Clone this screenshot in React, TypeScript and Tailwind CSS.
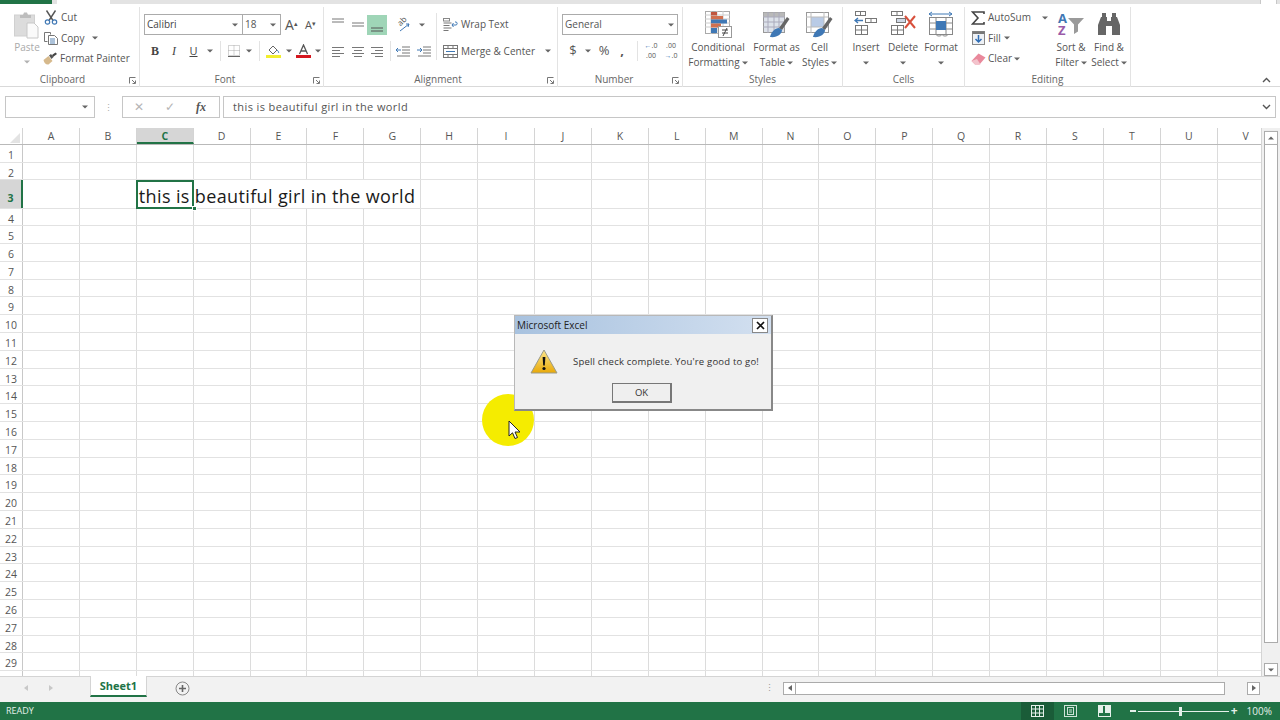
import type { ReactNode } from "react"

const COLS = "ABCDEFGHIJKLMNOPQRSTUV".split("")
const ROWS = Array.from({ length: 30 }, (_, i) => i + 1)

const Caret = ({ className = "" }: { className?: string }) => (
  <svg width="6" height="4" viewBox="0 0 6 4" className={"shrink-0 " + className}>
    <path d="M0 0.5h6L3 3.5z" fill="#666" />
  </svg>
)

const Launcher = () => (
  <svg width="7" height="7" viewBox="0 0 7 7" className="absolute right-[3px] bottom-[3px]">
    <path d="M0.5 6.5V0.5H6.5M3 3l3 3M6.5 3.5V6.5H3.5" fill="none" stroke="#777" />
  </svg>
)

const Group = ({ w, pr, label, launcher, children }: { w: string; pr: string; label: string; launcher?: boolean; children: ReactNode }) => (
  <div className={"relative shrink-0 flex flex-col h-[80px] border-r border-[#e3e3e3] " + w}>
    <div className="flex-1 flex min-h-0">{children}</div>
    <div className={"h-[15px] text-center text-[10px] leading-[15px] text-[#666] " + pr}>{label}</div>
    {launcher && <Launcher />}
  </div>
)

const BigBtn = ({ w, top, bottom, caretBelow, children }: { w: string; top: string; bottom?: string; caretBelow?: boolean; children: ReactNode }) => (
  <div className={"flex flex-col items-center shrink-0 " + w}>
    <div className="h-[29px] shrink-0 mt-[4px] flex items-start justify-center">{children}</div>
    <div className="h-[15px] shrink-0 leading-[15px] whitespace-nowrap">{top}</div>
    {bottom && (
      <div className="h-[15px] shrink-0 leading-[15px] whitespace-nowrap flex items-center gap-[2px]">
        {bottom}
        <Caret />
      </div>
    )}
    {caretBelow && <Caret className="mt-[6px]" />}
  </div>
)

const PasteIcon = () => (
  <svg width="26" height="27" viewBox="0 0 26 27">
    <rect x="0.5" y="3" width="20" height="21" fill="#dcdcdc" stroke="#d0d0d0" />
    <path d="M6 3h3l1-2.5h3l1 2.5h3v3H6z" fill="#bdbdbd" />
    <path d="M13 11h7l4 4v11H13z" fill="#fafafa" stroke="#c8c8c8" />
  </svg>
)
const CutIcon = () => (
  <svg width="14" height="15" viewBox="0 0 14 15" fill="none">
    <path d="M2.5 0.5l6.5 10M11.5 0.5L5 10.5" stroke="#555" strokeWidth="1.4" />
    <circle cx="3.5" cy="12" r="2.2" stroke="#3f78b5" strokeWidth="1.2" />
    <circle cx="10.5" cy="12" r="2.2" stroke="#3f78b5" strokeWidth="1.2" />
  </svg>
)
const CopyIcon = () => (
  <svg width="14" height="13" viewBox="0 0 14 13" fill="none">
    <path d="M0.5 0.5h6v2M0.5 0.5v9h3" stroke="#777" />
    <path d="M4.5 3.5h6l3 3v6h-9z" fill="#fff" stroke="#777" />
    <path d="M6 7h5M6 9h5M6 11h5" stroke="#5a86b5" />
  </svg>
)
const PainterIcon = () => (
  <svg width="15" height="13" viewBox="0 0 15 13">
    <path d="M0.5 8l5-4 4 5-4 3.5C3 13 1 11 0.5 8z" fill="#d6b98c" />
    <path d="M6 3.5l2-1.5 2.5 3-2 2z" fill="#555" />
    <path d="M9 3l3.5-2.5 1.5 1.5-4 3z" fill="#444" />
  </svg>
)
const Lines = ({ a, b, c, color = "#777" }: { a: string; b: string; c: string; color?: string }) => (
  <svg width="14" height="11" viewBox="0 0 14 11" fill="none" stroke={color}>
    <path d={a} />
    <path d={b} />
    <path d={c} />
  </svg>
)
const OrientIcon = () => (
  <div className="relative w-[15px] h-[14px]">
    <span className="absolute left-[1px] -top-[3px] -rotate-45 text-[8px] leading-[12px] text-[#555]">ab</span>
    <svg width="15" height="14" viewBox="0 0 15 14" fill="none" className="absolute left-0 top-0">
      <path d="M4 13L13 6M13 6h-3M13 6l-1 3" stroke="#3f78b5" />
    </svg>
  </div>
)
const IndentIcon = ({ inc }: { inc?: boolean }) => (
  <svg width="14" height="11" viewBox="0 0 14 11" fill="none">
    <path d="M6 1h8M6 4h8M6 7h8M1 10h13" stroke="#777" />
    {inc ? <path d="M0 4h5M3 2l2 2-2 2" stroke="#3f78b5" /> : <path d="M0 4h5M2 2L0 4l2 2" stroke="#3f78b5" />}
  </svg>
)
const WrapIcon = () => (
  <svg width="15" height="13" viewBox="0 0 15 13" fill="none">
    <rect x="0.5" y="0.5" width="6" height="2.5" stroke="#888" />
    <path d="M0.5 5h8M0.5 7.5h6M0.5 10h8M0.5 12.5h5" stroke="#777" />
    <path d="M9 7h4c1.5 0 1.5-3 0-3h-1M10.5 5L9 7l1.5 2" stroke="#3f78b5" />
  </svg>
)
const MergeIcon = () => (
  <svg width="15" height="13" viewBox="0 0 15 13" fill="none" stroke="#777">
    <rect x="0.5" y="0.5" width="14" height="12" />
    <path d="M0.5 3.5h14M0.5 9.5h14M5 0.5v3M10 0.5v3M5 9.5v3M10 9.5v3" />
    <path d="M3 6.5h9" stroke="#3f78b5" />
  </svg>
)
const BordersIcon = () => (
  <svg width="12" height="12" viewBox="0 0 12 12" fill="none" stroke="#aaa" strokeDasharray="1 1">
    <rect x="0.5" y="0.5" width="11" height="10" />
    <path d="M6 0.5v10M0.5 5.5h11" />
    <path d="M0 11.5h12" stroke="#666" strokeDasharray="none" />
  </svg>
)
const FillIcon = () => (
  <svg width="15" height="14" viewBox="0 0 15 14">
    <path d="M3 6l4-4 4 4-4 4z" fill="#fff" stroke="#666" />
    <path d="M11 6c1 1 2 2 1.5 3" fill="none" stroke="#3f78b5" />
    <rect x="0" y="11" width="15" height="3" fill="#f2ee2e" />
  </svg>
)
const FontColorIcon = () => (
  <svg width="15" height="14" viewBox="0 0 15 14">
    <path d="M3.500 10L7.500 1l4 9M5 7h5" fill="none" stroke="#555" strokeWidth="1.3" />
    <rect x="0" y="11" width="15" height="3" fill="#d5171f" />
  </svg>
)
const CondIcon = () => (
  <svg width="27" height="27" viewBox="0 0 27 27">
    <rect x="0.5" y="0.5" width="24" height="22" fill="#fff" stroke="#aaa" />
    <path d="M0 4h25M0 8h25M0 12h25M0 16h25M6 0v23M12 0v23M18 0v23" stroke="#ccc" />
    <rect x="6" y="1" width="6" height="3.5" fill="#c0563f" />
    <rect x="6" y="5" width="12" height="3.5" fill="#d07050" />
    <rect x="6" y="8.5" width="16" height="4" fill="#3f78b5" />
    <rect x="6" y="12.5" width="10" height="4" fill="#d07050" />
    <rect x="6" y="17" width="6" height="5" fill="#3f78b5" />
    <rect x="13.5" y="15.5" width="13" height="11" fill="#fff" stroke="#999" />
    <path d="M17 19h6M17 22h6M22 17l-4 8" stroke="#444" fill="none" />
  </svg>
)
const TableIcon = () => (
  <svg width="27" height="27" viewBox="0 0 27 27">
    <rect x="0.5" y="1.5" width="21" height="20" fill="#dde2ea" stroke="#999" />
    <rect x="0.5" y="1.5" width="21" height="4.5" fill="#b9b9b9" />
    <path d="M0 6h22M0 11h22M0 16h22M5 1v21M11 1v21M16 1v21" stroke="#aab" />
    <path d="M16 17L24 6l2.500 2L19 19z" fill="#666" />
    <path d="M7 26c1-5 5-9 9-9l3 2c0 4-5 8-12 7z" fill="#3f78b5" />
  </svg>
)
const StylesIcon = () => (
  <svg width="27" height="27" viewBox="0 0 27 27">
    <rect x="0.5" y="1.5" width="22" height="20" fill="#fff" stroke="#999" />
    <rect x="5" y="6" width="13" height="10" fill="#b9cbe6" />
    <path d="M0 6h22M5 1v21M18 1v21M0 16h22" stroke="#bbb" />
    <path d="M16 17L24 6l2.500 2L19 19z" fill="#666" />
    <path d="M7 26c1-5 5-9 9-9l3 2c0 4-5 8-12 7z" fill="#3f78b5" />
  </svg>
)
const InsertIcon = () => (
  <svg width="24" height="24" viewBox="0 0 24 24" fill="none" stroke="#777">
    <rect x="1.5" y="0.5" width="10" height="4" />
    <path d="M6.5 0.5v4" />
    <rect x="11.5" y="7.5" width="11" height="4" />
    <path d="M17 7.5v4" />
    <path d="M1 9.5h8M4 7L1 9.5 4 12" stroke="#3f78b5" strokeWidth="1.4" />
    <rect x="1.5" y="14.5" width="12" height="9" />
    <path d="M7.500 14.5v9M1.5 19h12" />
  </svg>
)
const DeleteIcon = () => (
  <svg width="27" height="24" viewBox="0 0 27 24" fill="none" stroke="#777">
    <rect x="1.5" y="0.5" width="11" height="4" />
    <path d="M7 0.5v4" />
    <rect x="6.5" y="7.5" width="9" height="4" fill="#cfd8e6" />
    <rect x="1.5" y="14.5" width="12" height="9" />
    <path d="M7.500 14.5v9M1.5 19h12" />
    <path d="M15 5l10 12M25 5L15 17" stroke="#d8503c" strokeWidth="2" />
  </svg>
)
const FormatIcon = () => (
  <svg width="26" height="27" viewBox="0 0 26 27" fill="none" stroke="#888">
    <path d="M1 3h23M1 3l3-2M1 3l3 2M24 3l-3-2M24 3l-3 2" stroke="#3f78b5" />
    <rect x="1.5" y="6.5" width="23" height="17" />
    <path d="M1.5 12h23M1.5 18h23M8 6.500v17M18 6.500v17" />
    <rect x="8" y="10" width="10" height="9" fill="#3f78b5" stroke="none" />
    <path d="M8 23.5c1 2 5 2 6 0M14 23.5c1 2 5 2 6 0" />
  </svg>
)
const SigmaIcon = () => (
  <svg width="14" height="14" viewBox="0 0 14 14" fill="none">
    <path d="M13 3V1H1.500L7 7l-5.500 6H13v-2" stroke="#444" strokeWidth="1.6" />
  </svg>
)
const FillDownIcon = () => (
  <svg width="13" height="14" viewBox="0 0 13 14">
    <rect x="0.5" y="0.5" width="12" height="13" fill="#eef1f5" stroke="#888" />
    <rect x="0.5" y="0.5" width="12" height="2.5" fill="#777" />
    <path d="M6.500 4v7M3.500 8l3 3 3-3" fill="none" stroke="#2f6db5" strokeWidth="1.5" />
  </svg>
)
const EraserIcon = () => (
  <svg width="15" height="12" viewBox="0 0 15 12">
    <path d="M0.5 8l7-7.500 7 4-6 7H4z" fill="#e9899c" />
    <path d="M0.5 8L4 11.500h5.500L6 6z" fill="#f3c3cc" />
  </svg>
)
const SortIcon = () => (
  <div className="flex items-start">
    <div className="flex flex-col font-bold text-[13px] leading-[12px] pt-[1px]">
      <span className="text-[#3f78b5]">A</span>
      <span className="text-[#9a5ba8]">Z</span>
    </div>
    <svg width="16" height="16" viewBox="0 0 16 16" className="mt-[7px] ml-px">
      <path d="M0 0h16l-6 6.500v7l-4 2.500V6.500z" fill="#9a9a9a" />
    </svg>
  </div>
)
const BinocularIcon = () => (
  <svg width="24" height="22" viewBox="0 0 24 22" fill="#666" className="mt-[2px]">
    <path d="M5 0h4v4H5zM15 0h4v4h-4z" />
    <path d="M4 4h6v4h4V4h6l3 8v10h-8v-9h-6v9H1V12z" />
  </svg>
)
const GridIcon = () => (
  <svg width="13" height="12" viewBox="0 0 13 12" fill="none" stroke="#e5f0ea">
    <rect x="0.5" y="0.5" width="12" height="11" />
    <path d="M4.500 0.5v11M8.500 0.5v11M0.5 4h12M0.5 8h12" />
  </svg>
)
const PageIcon = () => (
  <svg width="13" height="12" viewBox="0 0 13 12" fill="none" stroke="#cfe3d8">
    <rect x="0.5" y="0.5" width="12" height="11" />
    <rect x="3.5" y="2.5" width="6" height="7" />
    <path d="M5 5h3M5 7h3" />
  </svg>
)
const BreakIcon = () => (
  <svg width="13" height="12" viewBox="0 0 13 12">
    <rect x="0.5" y="0.5" width="12" height="11" fill="none" stroke="#e5f0ea" />
    <path d="M1 1h4v7H1zM7 1h5v7H7z" fill="#e5f0ea" />
  </svg>
)

const IconCell = ({ w, children }: { w: string; children: ReactNode }) => (
  <div className={"shrink-0 flex items-center justify-center " + w}>{children}</div>
)

const Sep = () => <div className="shrink-0 w-px h-[20px] bg-[#e3e3e3]" />

const Ribbon = () => (
  <div className="h-[83px] flex border-b border-[#d9d9d9] bg-white pt-[3px]">
    <Group w="w-[140px]" pr="pr-[14px]" label="Clipboard" launcher>
      <div className="ml-[10px] w-[34px] flex flex-col items-center text-[#aaa]">
        <div className="mt-[5px] h-[28px] shrink-0"><PasteIcon /></div>
        <div className="h-[15px] shrink-0 leading-[15px]">Paste</div>
        <Caret className="mt-[5px] opacity-50" />
      </div>
      <div className="flex flex-col mt-[2px] gap-[3.5px]">
        <div className="h-[17px] flex items-center gap-[3px]"><CutIcon />Cut</div>
        <div className="h-[17px] flex items-center gap-[3px]"><CopyIcon />Copy<Caret className="ml-[5px]" /></div>
        <div className="h-[17px] flex items-center gap-[2px] -ml-px"><PainterIcon />Format Painter</div>
      </div>
    </Group>

    <Group w="w-[184px]" pr="pr-[13px]" label="Font" launcher>
      <div className="pl-[4px] pt-[7px] flex flex-col">
        <div className="h-[21px] flex items-center">
          <div className="w-[99px] h-[21px] border border-[#ababab] flex items-center justify-between pl-[2px] pr-[4px] text-[#444]">Calibri<Caret /></div>
          <div className="w-[38px] h-[21px] border border-l-0 border-[#ababab] flex items-center justify-between pl-[2px] pr-[4px]">18<Caret /></div>
          <span className="ml-[4px] w-[20px] text-[14px] leading-none text-[#555]">A<sup className="text-[7px]">▴</sup></span>
          <span className="w-[20px] text-[11px] leading-none text-[#555]">A<sup className="text-[7px]">▾</sup></span>
        </div>
        <div className="mt-[5px] h-[22px] flex items-center text-[#444]">
          <span className="w-[19px] text-center font-['Liberation_Serif',serif] font-bold text-[12px] pl-[3px]">B</span>
          <span className="w-[19px] text-center font-['Liberation_Serif',serif] italic text-[12px] pl-[3px]">I</span>
          <span className="w-[20px] text-center text-[11px] underline pl-[3px]">U</span>
          <Caret className="ml-[5px]" />
          <div className="ml-[7px]"><Sep /></div>
          <IconCell w="w-[25px]"><BordersIcon /></IconCell>
          <Caret />
          <div className="ml-[7px]"><Sep /></div>
          <IconCell w="w-[26px]"><FillIcon /></IconCell>
          <Caret />
          <IconCell w="w-[23px]"><FontColorIcon /></IconCell>
          <Caret />
        </div>
      </div>
    </Group>

    <Group w="w-[234px]" pr="pr-[5px]" label="Alignment" launcher>
      <div className="pl-[4px] pt-[7px] flex flex-col">
        <div className="h-[21px] flex items-center">
          <IconCell w="w-[20px]"><div className="mb-[5px]"><Lines a="M1 2h12" b="M1 5h12" c="" /></div></IconCell>
          <IconCell w="w-[19px]"><Lines a="M1 4h12" b="M1 7h12" c="" /></IconCell>
          <IconCell w="w-[20px] h-[20px] bg-[#9fd5b7]"><div className="mt-[6px]"><Lines a="M1 6h12" b="M1 9h12" c="" color="#555" /></div></IconCell>
          <IconCell w="w-[32px]"><OrientIcon /></IconCell>
          <Caret />
        </div>
        <div className="mt-[5px] h-[22px] flex items-center">
          <IconCell w="w-[20px]"><Lines a="M1 1.5h12M1 7.5h12" b="M1 4.5h8" c="M1 10.5h8" /></IconCell>
          <IconCell w="w-[19px]"><Lines a="M1 1.5h12M1 7.5h12" b="M3 4.5h8" c="M3 10.5h8" /></IconCell>
          <IconCell w="w-[20px]"><Lines a="M1 1.5h12M1 7.5h12" b="M5 4.5h8" c="M5 10.5h8" /></IconCell>
          <div className="ml-[3px]"><Sep /></div>
          <IconCell w="w-[23px]"><IndentIcon /></IconCell>
          <IconCell w="w-[19px]"><IndentIcon inc /></IconCell>
        </div>
      </div>
      <div className="ml-[3px] mt-[6px] h-[47px] w-px bg-[#e3e3e3]" />
      <div className="ml-[6px] flex flex-col">
        <div className="mt-[7px] h-[21px] flex items-center gap-[3px]"><WrapIcon />Wrap Text</div>
        <div className="mt-[5px] h-[22px] flex items-center gap-[3px] tracking-[0.04px]"><MergeIcon />Merge &amp; Center<Caret className="ml-[7px]" /></div>
      </div>
    </Group>

    <Group w="w-[125px]" pr="pr-[12px]" label="Number" launcher>
      <div className="pl-[4px] pt-[7px] flex flex-col">
        <div className="w-[116px] h-[21px] border border-[#ababab] flex items-center justify-between pl-[2px] pr-[3px]">General<Caret /></div>
        <div className="mt-[5px] h-[22px] flex items-center text-[#555]">
          <span className="ml-[3px] w-[16px] text-center text-[13px]">$</span>
          <Caret className="ml-[4px]" />
          <span className="ml-[4px] w-[18px] text-center text-[13px]">%</span>
          <span className="ml-[1px] w-[16px] text-center text-[13px] font-bold">,</span>
          <div className="ml-[7px]"><Sep /></div>
          <div className="ml-[3px] w-[20px] text-[7px] leading-[10px] text-center"><span className="text-[#3f78b5]">←</span>.0<br />.00</div>
          <div className="w-[20px] text-[7px] leading-[10px] text-center">.00<br /><span className="text-[#3f78b5]">→</span>.0</div>
        </div>
      </div>
    </Group>

    <Group w="w-[160px]" pr="" label="Styles">
      <BigBtn w="w-[70px]" top="Conditional" bottom="Formatting"><CondIcon /></BigBtn>
      <BigBtn w="w-[47px]" top="Format as" bottom="Table"><TableIcon /></BigBtn>
      <BigBtn w="w-[39px]" top="Cell" bottom="Styles"><StylesIcon /></BigBtn>
    </Group>

    <Group w="w-[122px]" pr="" label="Cells">
      <BigBtn w="w-[46px]" top="Insert" caretBelow><InsertIcon /></BigBtn>
      <BigBtn w="w-[28px]" top="Delete" caretBelow><DeleteIcon /></BigBtn>
      <BigBtn w="w-[48px]" top="Format" caretBelow><FormatIcon /></BigBtn>
    </Group>

    <Group w="w-[166px]" pr="" label="Editing">
      <div className="ml-[6px] w-[81px] flex flex-col mt-[2px] gap-[3.5px]">
        <div className="h-[17px] flex items-center gap-[3px]"><SigmaIcon />AutoSum<Caret className="ml-[8px]" /></div>
        <div className="h-[17px] flex items-center gap-[3px] ml-px"><FillDownIcon />Fill<Caret /></div>
        <div className="h-[17px] flex items-center gap-[2px]"><EraserIcon />Clear<Caret /></div>
      </div>
      <BigBtn w="w-[38px]" top="Sort &" bottom="Filter"><SortIcon /></BigBtn>
      <BigBtn w="w-[38px]" top="Find &" bottom="Select"><BinocularIcon /></BigBtn>
    </Group>

    <div className="flex-1 flex justify-end items-end pb-[3px] pr-[9px]">
      <svg width="9" height="6" viewBox="0 0 9 6" fill="none"><path d="M1 5l3.500-3.500L8 5" stroke="#555" strokeWidth="1.4" /></svg>
    </div>
  </div>
)

const FormulaBar = () => (
  <div className="h-[41px] flex items-center pl-[5px] pr-[4px] pb-[1px]">
    <div className="w-[90px] h-[22px] border border-[#c6c6c6] flex items-center justify-end pr-[6px]"><Caret /></div>
    <div className="w-[27px] text-center text-[#aaa] text-[9px] leading-[5px]">⋮</div>
    <div className="w-[98px] h-[22px] border border-[#c6c6c6] flex items-center text-[#b5b5b5]">
      <span className="w-[31px] text-center text-[12px]">✕</span>
      <span className="w-[32px] text-center text-[12px]">✓</span>
      <span className="w-[30px] text-center font-['Liberation_Serif',serif] italic font-bold text-[12px] text-[#555]">fx</span>
    </div>
    <div className="ml-[3px] flex-1 h-[22px] border border-[#c6c6c6] flex items-center justify-between pl-[9px] pr-[4px] text-[11px] tracking-[0.4px]">
      this is beautiful girl in the world
      <svg width="9" height="6" viewBox="0 0 9 6" fill="none"><path d="M1 1l3.500 3.500L8 1" stroke="#555" strokeWidth="1.4" /></svg>
    </div>
  </div>
)

const rowHeight = (r: number) => {
  if (r === 1 || r === 2) return "h-[17.5px]"
  if (r === 3) return "h-[28.5px]"
  return "h-[17.8px]"
}

const Sheet = () => (
  <div className="w-[1262px] h-[548px] overflow-hidden border-r border-[#d4d4d4] text-[10.5px]">
    <div className="flex h-[17px] w-[1276px] border-b border-[#b9b9b9]">
      <div className="w-[23px] shrink-0 border-r border-[#d4d4d4] relative overflow-hidden">
        <div className="absolute right-[2px] bottom-[1px] w-0 h-0 border-l-[10px] border-l-transparent border-b-[10px] border-b-[#e3e3e3]" />
      </div>
      {COLS.map((c) => (
        <div
          key={c}
          className={
            c === "C"
              ? "w-[56.9px] shrink-0 text-center leading-[16px] bg-[#d6d6d6] border-b-2 border-[#217346] text-[#217346] font-bold border-r border-r-[#d4d4d4]"
              : "w-[56.9px] shrink-0 text-center leading-[16px] border-r border-[#d4d4d4] text-[#555]"
          }
        >
          {c}
        </div>
      ))}
    </div>
    {ROWS.map((r) => (
      <div key={r} className={"flex w-[1276px] border-b border-[#e2e2e2] " + rowHeight(r)}>
        <div
          className={
            r === 3
              ? "w-[23px] shrink-0 bg-[#d6d6d6] border-r-2 border-[#217346] text-[#217346] font-bold text-center pt-[9px] leading-[18px]"
              : "w-[23px] shrink-0 border-r border-[#c8c8c8] text-center leading-[20px] text-[#555]"
          }
        >
          {r < 30 ? r : ""}
        </div>
        {COLS.map((c) => {
          const overflowed = r === 3 && "DEF".includes(c)
          if (r === 3 && c === "C") {
            return (
              <div key={c} className="relative w-[56.9px] shrink-0">
                <div className="absolute -left-px top-0 w-[58px] h-[29px] border-2 border-[#217346]" />
                <div className="absolute right-[-3px] bottom-[-3px] w-[5px] h-[5px] bg-[#217346] border border-white" />
                <span className="absolute left-[2px] top-[3px] whitespace-nowrap text-[18px] leading-[26px] text-[#1a1a1a] font-['Open_Sans',sans-serif] tracking-[0.37px] z-10">
                  this is beautiful girl in the world
                </span>
              </div>
            )
          }
          return <div key={c} className={overflowed ? "w-[56.9px] shrink-0" : "w-[56.9px] shrink-0 border-r border-[#dcdcdc]"} />
        })}
      </div>
    ))}
  </div>
)

const VScroll = () => (
  <div className="flex-1 h-[548px] bg-[#f0f0f0] flex flex-col items-center pt-[3px]">
    <div className="w-[14px] h-[14px] bg-white border border-[#ababab] flex items-center justify-center rotate-180"><Caret /></div>
    <div className="w-[14px] h-[500px] bg-white border border-t-0 border-[#ababab]" />
    <div className="mt-[20px] w-[14px] h-[13px] bg-white border border-[#ababab] flex items-center justify-center"><Caret /></div>
  </div>
)

const TabsRow = () => (
  <div className="h-[26px] flex bg-[#f2f2f2] border-t border-[#d4d4d4]">
    <div className="w-[90px] flex items-center pl-[24px] gap-[21px] pb-[3px]">
      <span className="w-0 h-0 border-y-[3px] border-y-transparent border-r-[4px] border-r-[#c8c8c8]" />
      <span className="w-0 h-0 border-y-[3px] border-y-transparent border-l-[4px] border-l-[#c8c8c8]" />
    </div>
    <div className="w-[57px] h-[21px] -mt-px bg-white border-x border-[#d4d4d4] border-b-2 border-b-[#217346] text-[#217346] font-bold text-[11px] leading-[20px] text-center">Sheet1</div>
    <div className="ml-[28px] h-[22px] flex items-center">
      <svg width="15" height="15" viewBox="0 0 15 15" fill="none">
        <circle cx="7.5" cy="7.5" r="6.5" stroke="#888" />
        <path d="M7.500 4v7M4 7.500h7" stroke="#666" strokeWidth="1.6" />
      </svg>
    </div>
    <div className="ml-[575px] h-[22px] flex items-center text-[#999] text-[9px]">⋮</div>
    <div className="ml-[9px] h-[22px] flex items-center">
      <div className="w-[13px] h-[13px] bg-white border border-[#ababab] flex items-center justify-center">
        <span className="w-0 h-0 border-y-[3px] border-y-transparent border-r-[4px] border-r-[#666]" />
      </div>
      <div className="w-[429px] h-[13px] bg-white border-y border-r border-[#ababab]" />
      <div className="w-[22px] h-[13px]" />
      <div className="w-[13px] h-[13px] bg-white border border-[#ababab] flex items-center justify-center">
        <span className="w-0 h-0 border-y-[3px] border-y-transparent border-l-[4px] border-l-[#666]" />
      </div>
    </div>
  </div>
)

const IconCellDark = ({ children }: { children: ReactNode }) => (
  <div className="w-[33px] h-full bg-[#1a5c38] flex items-center justify-center">{children}</div>
)

const StatusBar = () => (
  <div className="h-[18px] bg-[#217346] flex items-center text-[#e5f0ea] text-[9px] pl-[6px]">
    <span>READY</span>
    <div className="ml-auto flex items-center h-full">
      <IconCellDark><GridIcon /></IconCellDark>
      <div className="w-[34px] flex justify-center"><PageIcon /></div>
      <div className="w-[34px] flex justify-center"><BreakIcon /></div>
      <span className="ml-[8px] w-[6px] h-[2px] bg-[#e5f0ea]" />
      <div className="relative ml-[2px] w-[91px] h-px bg-[#e5f0ea]">
        <div className="absolute left-[41px] -top-[4px] w-[3px] h-[9px] bg-[#e5f0ea]" />
      </div>
      <span className="ml-[2px] text-[12px] font-bold leading-none">+</span>
      <span className="ml-[9px] mr-[8px] text-[10px]">100%</span>
    </div>
  </div>
)

const Dialog = () => (
  <div className="absolute left-[514px] top-[315px] w-[259px] h-[96px] bg-[#f0f0f0] border border-[#b8b8b8] border-r-[#888] border-b-[#888] border-r-2 border-b-2 z-20">
    <div className="h-[18px] bg-gradient-to-r from-[#a8c2df] to-[#d3e0f0] flex items-center justify-between pl-[2px] pr-[3px] text-[10px] text-[#222]">
      Microsoft Excel
      <div className="w-[16px] h-[15px] bg-white border border-[#888] flex items-center justify-center">
        <svg width="9" height="9" viewBox="0 0 9 9"><path d="M1 1l7 7M8 1L1 8" stroke="#111" strokeWidth="1.7" /></svg>
      </div>
    </div>
    <div className="flex items-center pl-[15px] pt-[15px]">
      <svg width="28" height="25" viewBox="0 0 28 25">
        <defs>
          <linearGradient id="warn" x1="0" y1="0" x2="0" y2="1">
            <stop offset="0" stopColor="#fbe58a" />
            <stop offset="1" stopColor="#e9a908" />
          </linearGradient>
        </defs>
        <path d="M14 1L27 24H1z" fill="url(#warn)" stroke="#9a9a8a" strokeLinejoin="round" />
        <path d="M12.600 8h2.800l-0.600 8.500h-1.600z" fill="#111" />
        <circle cx="14" cy="19.5" r="1.6" fill="#111" />
      </svg>
      <span className="ml-[15px] mt-[1px] text-[9.5px] tracking-[0.2px] text-[#333] whitespace-nowrap">Spell check complete. You&apos;re good to go!</span>
    </div>
    <div className="flex justify-center mt-[9px] pr-[2px]">
      <div className="w-[60px] h-[20px] bg-[#efefef] border border-[#777] border-b-2 border-r-2 text-center text-[9.5px] leading-[18px] text-[#333]">OK</div>
    </div>
  </div>
)

const Pointer = () => (
  <>
    <div className="absolute left-[482px] top-[394px] w-[52px] h-[52px] rounded-full bg-[#f5ec00] z-10" />
    <svg width="14" height="20" viewBox="0 0 14 20" className="absolute left-[508px] top-[420px] z-30">
      <path d="M1 1v15l3.500-3.200L7 18.500l2.500-1L7 12h5z" fill="#fff" stroke="#222" strokeWidth="1" strokeLinejoin="round" />
    </svg>
  </>
)

export default function App() {
  return (
    <div className="relative w-[1280px] h-[720px] overflow-hidden bg-white font-['Open_Sans',sans-serif] text-[10px] text-[#555]">
      <div className="h-[4px] flex bg-[#e3e3e3]">
        <div className="w-[52px] bg-[#217346]" />
        <div className="ml-[5px] w-[53px] bg-white" />
        <div className="ml-auto mr-[3px] w-[17px] bg-white border-x border-[#c8c8c8]" />
      </div>
      <Ribbon />
      <FormulaBar />
      <div className="flex">
        <Sheet />
        <VScroll />
      </div>
      <TabsRow />
      <StatusBar />
      <Dialog />
      <Pointer />
    </div>
  )
}
